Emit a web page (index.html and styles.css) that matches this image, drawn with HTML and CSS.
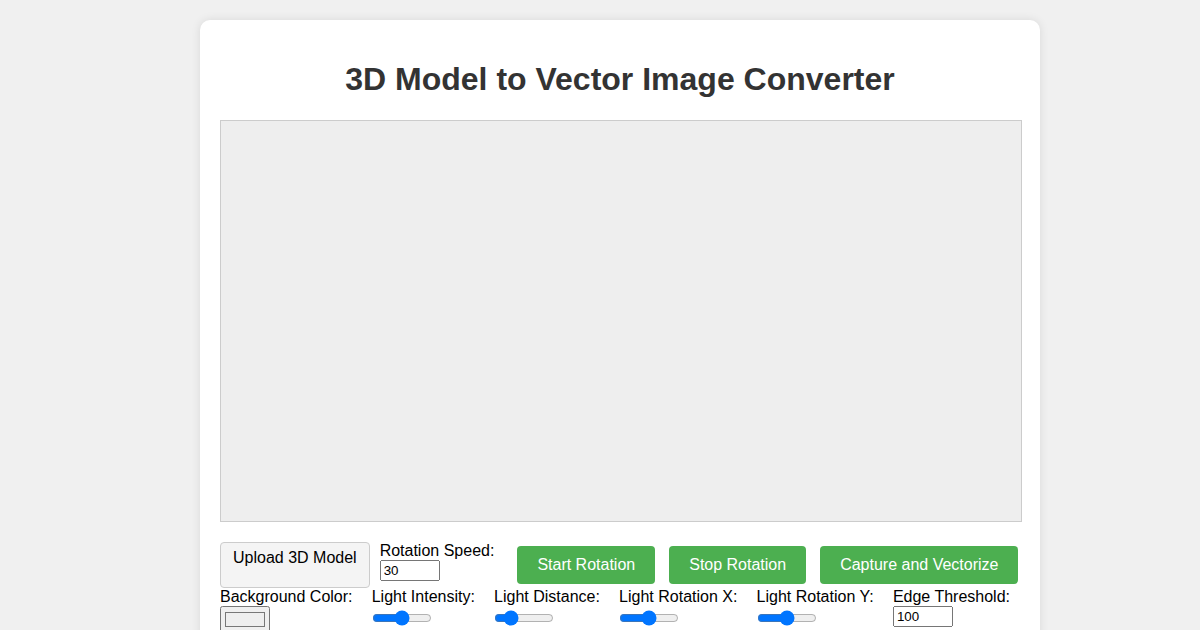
FILE: index.html
```html
<!DOCTYPE html>
<html lang="en">

<head>
    <meta charset="UTF-8">
    <meta name="viewport" content="width=device-width, initial-scale=1.0">
    <title>3D Model to Vector Image Converter</title>
    <link rel="stylesheet" href="styles.css">
</head>

<body>
    <div class="container">
        <h1>3D Model to Vector Image Converter</h1>
        <canvas id="viewer" width="800" height="400"></canvas>

        <div class="controls">
            <div class="controls-row top-row">
                <label class="upload-button" for="modelFile">Upload 3D Model</label>
                <input type="file" id="modelFile" accept=".obj,.stl,.gltf,.glb" hidden>
                <div class="control-group speed-group">
                    <label for="rotationSpeed">Rotation Speed:</label>
                    <input type="number" id="rotationSpeed" value="30">
                </div>
                <button class="action-button start-button">Start Rotation</button>
                <button class="action-button stop-button">Stop Rotation</button>
                <button class="action-button capture-button">Capture and Vectorize</button>
            </div>

            <div class="controls-row bottom-row">
                <div class="control-group">
                    <label for="bgColor">Background Color:</label>
                    <input type="color" id="bgColor" value="#eeeeee">
                </div>
                <div class="control-group">
                    <label for="lightIntensity">Light Intensity:</label>
                    <input type="range" id="lightIntensity" min="0" max="2" step="0.1" value="1">
                </div>
                <div class="control-group">
                    <label for="lightDistance">Light Distance:</label>
                    <input type="range" id="lightDistance" min="0" max="100" value="20">
                </div>
                <div class="control-group">
                    <label for="lightRotX">Light Rotation X:</label>
                    <input type="range" id="lightRotX" min="-180" max="180" value="0">
                </div>
                <div class="control-group">
                    <label for="lightRotY">Light Rotation Y:</label>
                    <input type="range" id="lightRotY" min="-180" max="180" value="0">
                </div>
                <div class="control-group">
                    <label for="edgeThreshold">Edge Threshold:</label>
                    <input type="number" id="edgeThreshold" value="100">
                </div>
            </div>
        </div>
    </div>

    <script>
        // 캔버스 배경을 선택한 색으로 칠함
        var canvas = document.getElementById('viewer');
        var ctx = canvas.getContext('2d');

        function paintBackground() {
            ctx.fillStyle = document.getElementById('bgColor').value;
            ctx.fillRect(0, 0, canvas.width, canvas.height);
        }

        document.getElementById('bgColor').addEventListener('input', paintBackground);
        paintBackground();
    </script>
</body>

</html>
```

FILE: styles.css
```css
body {
    font-family: "Liberation Sans", Arial, sans-serif;
    margin: 0;
    padding: 20px 0 0 40px;
    background-color: #f0f0f0;
    display: flex;
    flex-direction: column;
    align-items: center;
}

.container {
    width: 800px;
    background-color: #fff;
    padding: 20px;
    border-radius: 10px;
    box-shadow: 0 0 10px rgba(0, 0, 0, 0.1);
}

h1 {
    text-align: center;
    font-size: 32px;
    color: #333;
    margin: 0.67em 0;
}

#viewer {
    display: block;
    background-color: #eee;
    border: 1px solid #ccc;
}

.controls {
    margin-top: 20px;
    font-size: 16px;
    color: #000;
}

.controls-row {
    display: flex;
    align-items: flex-start;
}

.bottom-row {
    gap: 19.2px;
}

.control-group label {
    display: block;
}

.control-group input[type="number"] {
    width: 60px;
    box-sizing: border-box;
    margin: 0;
}

.control-group input[type="color"] {
    margin: 0;
}

.control-group input[type="range"] {
    width: 60px;
    margin: 4px 0 0;
    accent-color: #0075ff;
}

.upload-button {
    display: inline-block;
    padding: 6px 12px 20px;
    background-color: #f4f4f4;
    border: 1px solid #ccc;
    border-radius: 4px;
    cursor: pointer;
}

.speed-group {
    margin-left: 10px;
}

.action-button {
    margin-top: 4px;
    background-color: #4CAF50;
    color: #fff;
    border: none;
    padding: 10px 20px;
    border-radius: 4px;
    font-family: inherit;
    font-size: 16px;
    cursor: pointer;
}

.action-button:hover {
    background-color: #45a049;
}

.start-button {
    margin-left: 23px;
}

.stop-button {
    margin-left: 14px;
}

.capture-button {
    margin-left: 14px;
}
```
